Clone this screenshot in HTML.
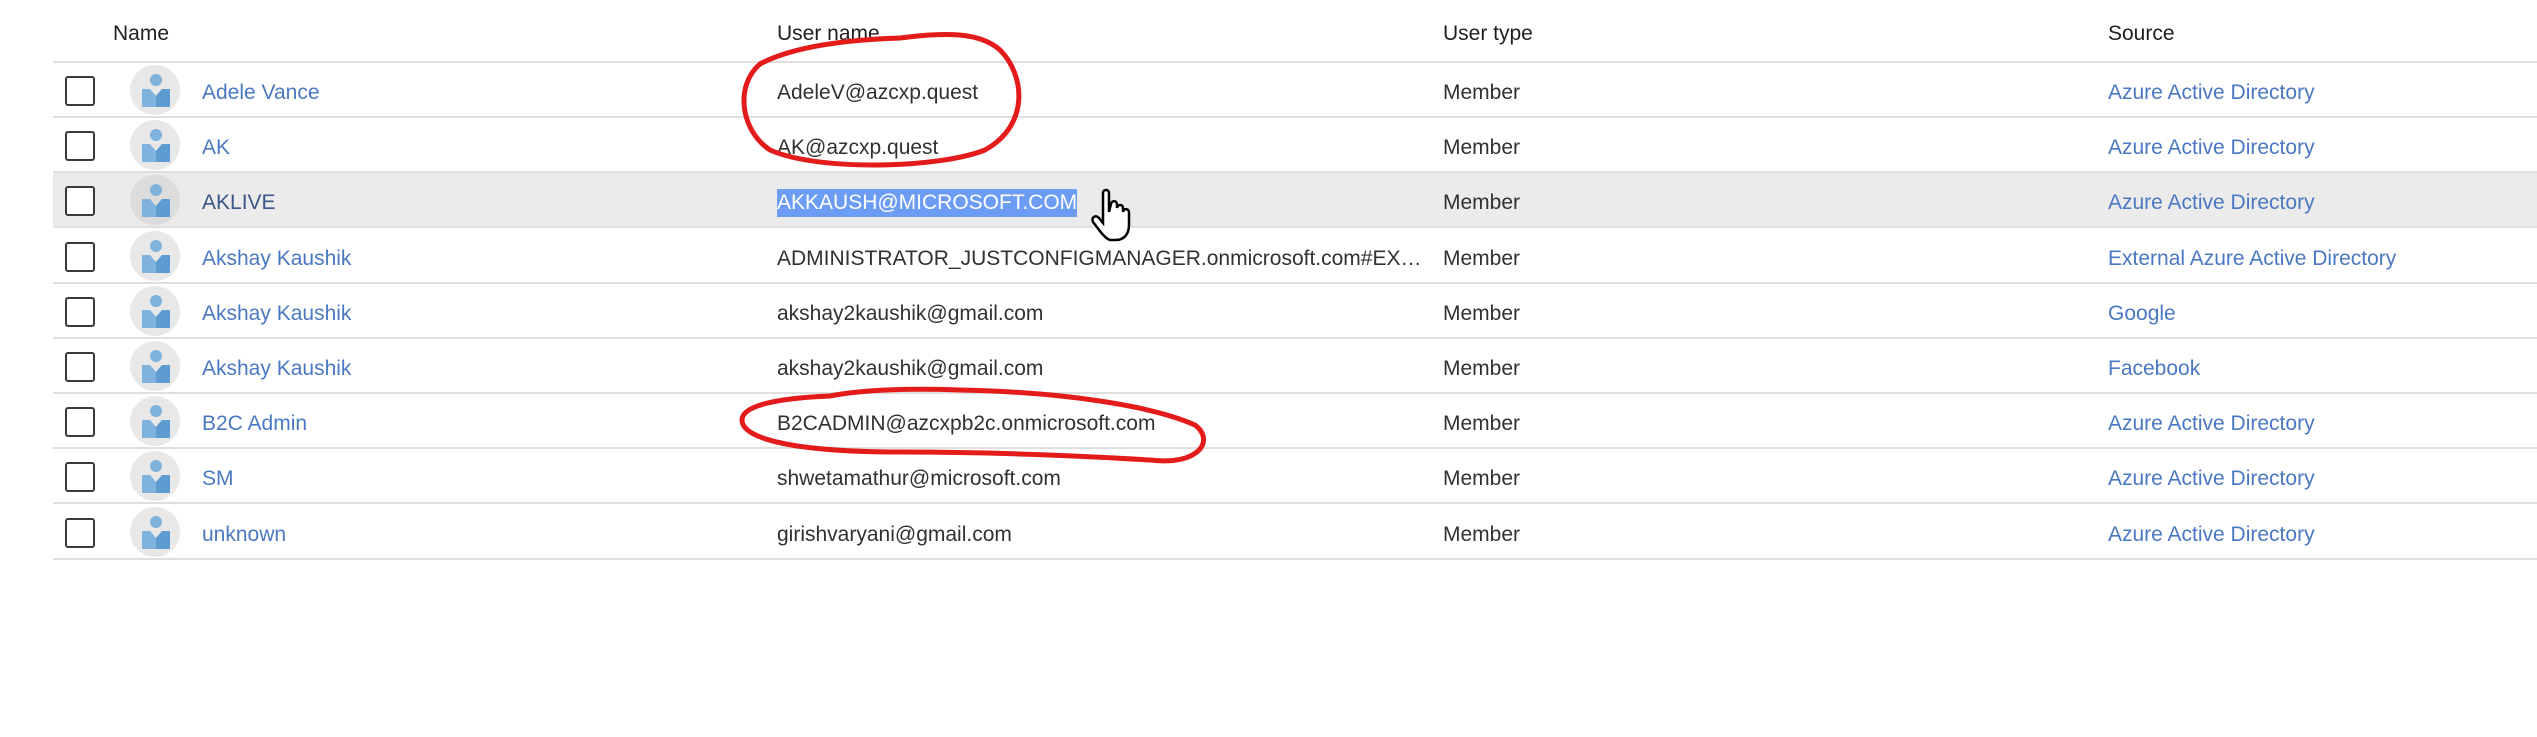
<!DOCTYPE html>
<html><head><meta charset="utf-8"><style>
body{margin:0;width:2537px;height:737px;background:#fff;font-family:"Liberation Sans",sans-serif;position:relative;overflow:hidden}
.h{position:absolute;top:22px;font-size:21px;color:#201f1e}
.line{position:absolute;left:53px;right:0;height:2px;background:#e1dfdd}
.row{position:absolute;left:53px;right:0;height:54px}
.cb{position:absolute;left:12px;width:26px;height:26px;border:2px solid #3b3a39;border-radius:3px;background:#fff}
.av{position:absolute;left:77px;width:50px;height:50px}
.t{position:absolute;font-size:21px;white-space:nowrap;color:#323130}
.lk{color:#4a78c2}
</style></head><body>
<div class="h" style="left:113px">Name</div>
<div class="h" style="left:777px">User name</div>
<div class="h" style="left:1443px">User type</div>
<div class="h" style="left:2108px">Source</div>
<div class="line" style="top:61px"></div>

<div id="rows"></div>
<script>
(function(){
var data=[["Adele Vance","AdeleV@azcxp.quest","Azure Active Directory"],["AK","AK@azcxp.quest","Azure Active Directory"],["AKLIVE","AKKAUSH@MICROSOFT.COM","Azure Active Directory"],["Akshay Kaushik","ADMINISTRATOR_JUSTCONFIGMANAGER.onmicrosoft.com#EXT#@azcxp.onmicrosoft.com","External Azure Active Directory"],["Akshay Kaushik","akshay2kaushik@gmail.com","Google"],["Akshay Kaushik","akshay2kaushik@gmail.com","Facebook"],["B2C Admin","B2CADMIN@azcxpb2c.onmicrosoft.com","Azure Active Directory"],["SM","shwetamathur@microsoft.com","Azure Active Directory"],["unknown","girishvaryani@gmail.com","Azure Active Directory"]];
var h="";
for(var i=0;i<data.length;i++){
 var ty=63+i*55.2;
 var sel=i==2;
 h+='<div class="row" style="top:'+ty+'px;'+(sel?'background:#ebebeb':'')+'">';
 h+='<div class="cb" style="top:13px"></div>';
 h+='<svg class="av" style="top:2px" viewBox="0 0 50 50"><circle cx="25" cy="25" r="25" fill="'+(sel?'#dcdcdc':'#e8e8e8')+'"/><circle cx="26" cy="15" r="6" fill="#7fb2dc"/><path d="M12 24h8l6 7 6-7h8v18H12z" fill="#7fb2dc"/><path d="M26 31l6-7h8v18H26z" fill="#5e9bd0"/></svg>';
 h+='<div class="t lk" style="left:149px;top:18px;'+(sel?'color:#3b5688':'')+'">'+data[i][0]+'</div>';
 if(sel) h+='<div class="t" style="left:724px;top:16px;background:#6c9cf4;color:#fff;padding:2px 0">'+data[i][1]+'</div>';
 else h+='<div class="t" style="left:724px;top:18px;width:646px;overflow:hidden;text-overflow:ellipsis">'+data[i][1]+'</div>';
 h+='<div class="t" style="left:1390px;top:18px">Member</div>';
 h+='<div class="t lk" style="left:2055px;top:18px">'+data[i][2]+'</div>';
 h+='</div><div class="line" style="top:'+(ty+53)+'px"></div>';
}
document.getElementById("rows").innerHTML=h;
})();
</script>
<svg style="position:absolute;left:0;top:0" width="2537" height="737">
<path d="M900 38 C840 40 790 48 760 64 C735 85 740 130 770 150 C820 172 940 168 985 150 C1030 125 1025 75 1000 50 C980 32 945 32 900 38" fill="none" stroke="#e31b1b" stroke-width="5" stroke-linecap="round"/>
<path d="M830 396 C780 398 742 405 742 420 C742 440 800 452 900 452 C1000 452 1080 456 1150 460 C1200 466 1215 440 1195 425 C1150 405 1060 392 960 390 C900 388 860 390 830 396" fill="none" stroke="#e31b1b" stroke-width="5" stroke-linecap="round"/>
<path d="M1103 193 C1103 189 1109 189 1109 193 L1109 212 L1111 204 C1112 200 1117 200 1117 205 L1117 208 C1118 204 1123 204 1123 208 L1123 212 C1124 208 1129 208 1129 213 L1129 225 C1129 234 1124 240 1116 240 L1110 240 C1104 238 1098 228 1093 222 C1091 218 1095 214 1099 218 L1103 223 Z" fill="#fff" stroke="#000" stroke-width="2.5"/>
</svg>
</body></html>
